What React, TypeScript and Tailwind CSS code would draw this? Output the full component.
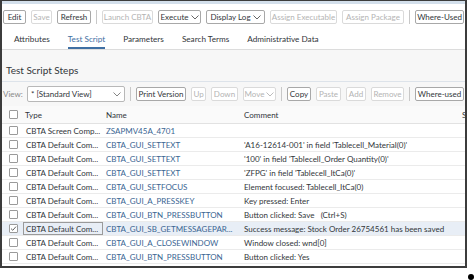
import React from "react";

const F = { fontFamily: "Lato, 'Liberation Sans', Arial, sans-serif" };

function Chev({ c = "#555" }: { c?: string }) {
  return (
    <svg width="8" height="5" viewBox="0 0 8 5" className="ml-[2px]">
      <path d="M0.5 0.5 L4 4 L7.5 0.5" fill="none" stroke={c} strokeWidth="0.9" />
    </svg>
  );
}

function Btn({ label, disabled, chev, w }: { label: string; disabled?: boolean; chev?: boolean; w: string }) {
  return (
    <div
      className={
        "flex items-center justify-center shrink-0 h-[14px] rounded-[2px] border bg-white whitespace-nowrap leading-none " +
        w +
        " " +
        (disabled ? "border-[#dadada] text-[#b4b4b4]" : "border-[#a8a8a8] text-[#32363a]")
      }
    >
      {label}
      {chev && <Chev c={disabled ? "#b4b4b4" : "#555"} />}
    </div>
  );
}

function Sep() {
  return <div className="w-px h-[14px] bg-[#c8c8c8] shrink-0" />;
}

function Box({ checked }: { checked?: boolean }) {
  return (
    <div className="w-[9px] h-[9px] border border-[#9a9a9a] bg-white rounded-[1px] flex items-center justify-center">
      {checked && (
        <svg width="7" height="7" viewBox="0 0 7 7">
          <path d="M1 3.6 L2.8 5.3 L6 1.6" fill="none" stroke="#555" strokeWidth="0.9" />
        </svg>
      )}
    </div>
  );
}

const rows: [string, string, string][] = [
  ["CBTA Screen Comp...", "ZSAPMV45A_4701", ""],
  ["CBTA Default Com...", "CBTA_GUI_SETTEXT", "'A16-12614-001' in field 'Tablecell_Material(0)'"],
  ["CBTA Default Com...", "CBTA_GUI_SETTEXT", "'100' in field 'Tablecell_Order Quantity(0)'"],
  ["CBTA Default Com...", "CBTA_GUI_SETTEXT", "'ZFPG' in field 'Tablecell_ItCa(0)'"],
  ["CBTA Default Com...", "CBTA_GUI_SETFOCUS", "Element focused: Tablecell_ItCa(0)"],
  ["CBTA Default Com...", "CBTA_GUI_A_PRESSKEY", "Key pressed: Enter"],
  ["CBTA Default Com...", "CBTA_GUI_BTN_PRESSBUTTON", "Button clicked: Save   (Ctrl+S)"],
  ["CBTA Default Com...", "CBTA_GUI_SB_GETMESSAGEPAR...", "Success message: Stock Order 26754561 has been saved"],
  ["CBTA Default Com...", "CBTA_GUI_A_CLOSEWINDOW", "Window closed: wnd[0]"],
  ["CBTA Default Com...", "CBTA_GUI_BTN_PRESSBUTTON", "Button clicked: Yes"],
];

export default function App() {
  return (
    <div className="w-[474px] h-[280px] bg-white relative overflow-hidden text-[8px] text-[#32363a]" style={F}>
      <div className="w-[467px] h-[268px] border-t border-l-2 border-r-2 border-b-2 border-[#3c3c3c] flex flex-col overflow-hidden">
        <div className="h-[3px] bg-[#d3dfeb] shrink-0" />
        {/* main toolbar */}
        <div className="h-[26px] shrink-0 flex items-center gap-[5px] pl-px bg-white">
          <Btn label="Edit" w="w-[23px]" />
          <Btn label="Save" disabled w="w-[21px]" />
          <Btn label="Refresh" w="w-[34px]" />
          <Sep />
          <Btn label="Launch CBTA" disabled w="w-[51px]" />
          <Btn label="Execute" chev w="w-[43px]" />
          <Btn label="Display Log" chev w="w-[59px]" />
          <Btn label="Assign Executable" disabled w="w-[67px]" />
          <Btn label="Assign Package" disabled w="w-[62px]" />
          <Sep />
          <Btn label="Where-Used" w="w-[49px]" />
        </div>
        {/* tabs */}
        <div className="h-[20px] shrink-0 flex items-stretch pl-[3px] border-b border-[#dcdcdc] bg-white text-[8.2px]">
          {["Attributes", "Test Script", "Parameters", "Search Terms", "Administrative Data"].map((t) => (
            <div key={t} className="px-[9px] flex items-center">
              <div
                className={
                  "h-full flex items-center pt-[1px] border-b-2 " +
                  (t === "Test Script" ? "text-[#3f6fa3] border-[#3f6fa3]" : "border-transparent text-[#32363a]")
                }
              >
                {t}
              </div>
            </div>
          ))}
        </div>
        {/* title area */}
        <div className="h-[32px] shrink-0 bg-[#f7f7f7] flex items-end pl-[4px] pb-[3px] border-b border-[#dde3ea] text-[10px] text-[#32363a]">
          Test Script Steps
        </div>
        {/* view toolbar */}
        <div className="h-[24px] shrink-0 bg-[#f7f7f7] flex items-center gap-[5px] pl-px">
          <span className="text-[#8a8a8a] w-[19px] shrink-0">View:</span>
          <div className="w-[98px] h-[16px] shrink-0 bg-white border border-[#b8b8b8] rounded-[2px] flex items-center justify-between pl-[3px] pr-[3px] whitespace-nowrap">
            <span>* [Standard View]</span>
            <Chev c="#777" />
          </div>
          <Sep />
          <Btn label="Print Version" w="w-[50px]" />
          <Btn label="Up" disabled w="w-[15px]" />
          <Btn label="Down" disabled w="w-[27px]" />
          <Btn label="Move" disabled chev w="w-[33px]" />
          <Sep />
          <Btn label="Copy" w="w-[24px]" />
          <Btn label="Paste" disabled w="w-[25px]" />
          <Btn label="Add" disabled w="w-[20px]" />
          <Btn label="Remove" disabled w="w-[33px]" />
          <Sep />
          <Btn label="Where-used" w="w-[49px]" />
        </div>
        {/* table */}
        <div className="flex-1 bg-white flex flex-col">
          <div className="h-[18px] shrink-0 flex items-center border-b border-[#e2e2e2] bg-[#fafafa]">
            <div className="w-[20px] shrink-0 flex justify-center pl-[3px]"><Box /></div>
            <div className="w-[82px] shrink-0 pl-[3px]">Type</div>
            <div className="w-[138px] shrink-0 pl-[2px]">Name</div>
            <div className="flex-1 pl-[2px]">Comment</div>
            <div className="w-[3px] shrink-0 overflow-hidden">S</div>
          </div>
          {rows.map((r, i) => {
            const sel = i === 7;
            return (
              <div
                key={i}
                className={"h-[14px] shrink-0 flex items-center border-b border-[#ebebeb] " + (sel ? "bg-[#e8eef6]" : "")}
              >
                <div className="w-[20px] shrink-0 flex justify-center pl-[3px]"><Box checked={sel} /></div>
                <div className={"w-[80px] shrink-0 h-[13px] flex items-center pl-[2px] ml-px mr-px whitespace-nowrap " + (sel ? "border border-[#9a9a9a]" : "border border-transparent")}>
                  {r[0]}
                </div>
                <div className="w-[138px] shrink-0 pl-[2px] text-[#3a6592] whitespace-nowrap overflow-hidden">{r[1]}</div>
                <div className="flex-1 pl-[2px] whitespace-pre overflow-hidden">{r[2]}</div>
              </div>
            );
          })}
        </div>
      </div>
      <div className="absolute left-[468px] top-[274px] w-[6px] h-[6px] rounded-full bg-black" />
    </div>
  );
}
